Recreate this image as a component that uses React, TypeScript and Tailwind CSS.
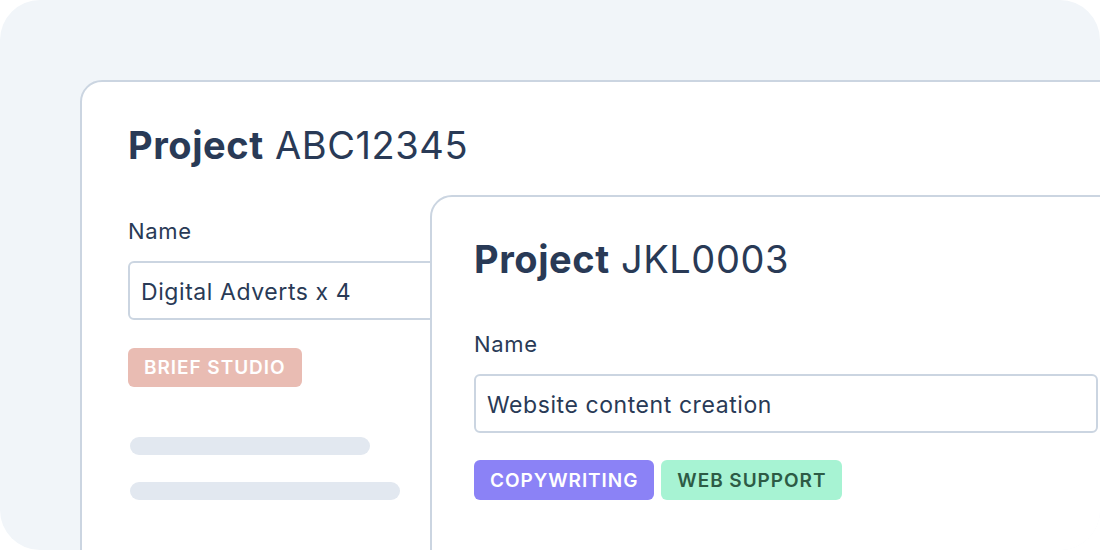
import React from "react";

const font = { fontFamily: "Inter, 'Noto Sans', sans-serif" };

export default function App() {
  return (
    <div className="w-[1100px] h-[550px] bg-white overflow-hidden" style={font}>
      <div className="relative w-full h-full rounded-[40px] bg-[#f1f5f9] overflow-hidden pl-[80px] pt-[80px]">
        {/* Card 1 */}
        <div className="w-[1100px] h-[600px] bg-white border-2 border-[#cbd5e1] rounded-tl-[22px] pl-[46px] pt-[43px] text-[#293a56]">
          <h1 className="text-[38px] leading-[40px] tracking-[0.015em]">
            <span className="font-bold">Project</span> ABC12345
          </h1>
          <div className="mt-[52px] text-[22px] leading-[28px] font-normal tracking-[0.03em]">Name</div>
          <div className="mt-[16px] w-[400px] h-[59px] border-2 border-[#cbd5e1] rounded-[6px] flex items-center px-[11px] pt-[3px] text-[23px] tracking-[0.025em]">
            Digital Adverts x 4
          </div>
          <div className="mt-[28px] inline-flex items-center h-[39px] px-[16px] pt-[2px] rounded-[6px] bg-[#e9bcb3] text-white font-semibold text-[19px] tracking-[0.05em]">
            BRIEF STUDIO
          </div>
          <div className="mt-[50px] flex flex-col gap-[27px] pl-[2px]">
            <div className="w-[240px] h-[18px] rounded-full bg-[#e2e8f0]" />
            <div className="w-[270px] h-[18px] rounded-full bg-[#e2e8f0]" />
          </div>
        </div>

        {/* Card 2 (overlapping window) */}
        <div className="absolute left-[430px] top-[195px] w-[800px] h-[500px] bg-white border-2 border-[#cbd5e1] rounded-tl-[22px] pl-[42px] pt-[42px] text-[#293a56]">
          <h1 className="text-[38px] leading-[40px] tracking-[0.015em]">
            <span className="font-bold">Project</span> JKL0003
          </h1>
          <div className="mt-[51px] text-[22px] leading-[28px] font-normal tracking-[0.03em]">Name</div>
          <div className="mt-[16px] w-[624px] h-[59px] border-2 border-[#cbd5e1] rounded-[6px] flex items-center px-[11px] pt-[3px] text-[23px] tracking-[0.025em]">
            Website content creation
          </div>
          <div className="mt-[27px] flex gap-[7px]">
            <div className="inline-flex items-center h-[40px] px-[16px] pt-[2px] rounded-[6px] bg-[#8b82f6] text-white font-semibold text-[19px] tracking-[0.05em]">
              COPYWRITING
            </div>
            <div className="inline-flex items-center h-[40px] px-[16px] pt-[2px] rounded-[6px] bg-[#a7f3d3] text-[#2d5b45] font-semibold text-[19px] tracking-[0.05em]">
              WEB SUPPORT
            </div>
          </div>
        </div>
      </div>
    </div>
  );
}
